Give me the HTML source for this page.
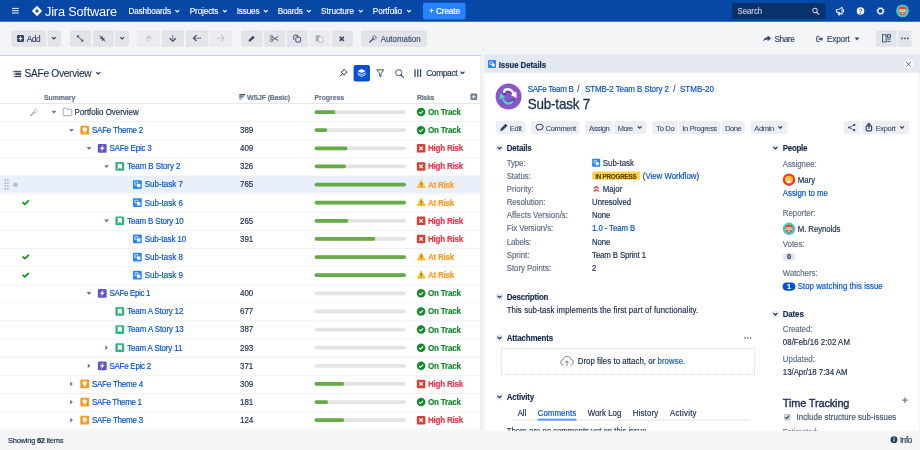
<!DOCTYPE html><html><head><meta charset="utf-8"><title>Structure</title><style>
html,body{margin:0;padding:0}
body{width:920px;height:450px;overflow:hidden;position:relative;background:#f4f5f7;font-family:"Liberation Sans", sans-serif;}
.b{position:absolute;display:block}
.t{position:absolute;white-space:nowrap;line-height:12px;font-family:"Liberation Sans", sans-serif;-webkit-text-stroke:.16px;transform:scaleY(1.07);transform-origin:50% 60%;}

</style></head><body>
<div id="root" style="position:absolute;left:0;top:0;width:920px;height:450px;will-change:transform;">
<svg class="b" style="left:0;top:0" width="920" height="450" viewBox="0 0 920 450"><path d="M0.00 0.00H920.00V21.80H0.00V0.00Z" fill="#0747a6"/><path d="M424.90 2.80H463.50A2.0 2.0 0 0 1 465.50 4.80V17.60A2.0 2.0 0 0 1 463.50 19.60H424.90A2.0 2.0 0 0 1 422.90 17.60V4.80A2.0 2.0 0 0 1 424.90 2.80Z" fill="#2684ff"/><path d="M734.00 3.00H823.50A2.0 2.0 0 0 1 825.50 5.00V17.00A2.0 2.0 0 0 1 823.50 19.00H734.00A2.0 2.0 0 0 1 732.00 17.00V5.00A2.0 2.0 0 0 1 734.00 3.00Z" fill="#09326c"/><path d="M13.10 30.50H45.90V46.80H13.10A2.0 2.0 0 0 1 11.10 44.80V32.50A2.0 2.0 0 0 1 13.10 30.50Z" fill="#e1e4e9"/><path d="M47.60 30.50H59.20A2.0 2.0 0 0 1 61.20 32.50V44.80A2.0 2.0 0 0 1 59.20 46.80H47.60V30.50Z" fill="#e1e4e9"/><path d="M71.80 30.50H91.00V46.80H71.80A2.0 2.0 0 0 1 69.80 44.80V32.50A2.0 2.0 0 0 1 71.80 30.50Z" fill="#e1e4e9"/><path d="M92.90 30.50H113.80V46.80H92.90V30.50Z" fill="#e1e4e9"/><path d="M115.20 30.50H127.00A2.0 2.0 0 0 1 129.00 32.50V44.80A2.0 2.0 0 0 1 127.00 46.80H115.20V30.50Z" fill="#e1e4e9"/><path d="M139.20 30.50H160.00V46.80H139.20A2.0 2.0 0 0 1 137.20 44.80V32.50A2.0 2.0 0 0 1 139.20 30.50Z" fill="#eaecf0"/><path d="M161.70 30.50H184.00V46.80H161.70V30.50Z" fill="#e1e4e9"/><path d="M185.90 30.50H208.30V46.80H185.90V30.50Z" fill="#e1e4e9"/><path d="M210.00 30.50H230.20A2.0 2.0 0 0 1 232.20 32.50V44.80A2.0 2.0 0 0 1 230.20 46.80H210.00V30.50Z" fill="#eaecf0"/><path d="M243.00 30.50H262.50V46.80H243.00A2.0 2.0 0 0 1 241.00 44.80V32.50A2.0 2.0 0 0 1 243.00 30.50Z" fill="#e1e4e9"/><path d="M264.20 30.50H285.20V46.80H264.20V30.50Z" fill="#e1e4e9"/><path d="M286.90 30.50H307.70V46.80H286.90V30.50Z" fill="#e1e4e9"/><path d="M309.00 30.50H330.20V46.80H309.00V30.50Z" fill="#eaecf0"/><path d="M331.90 30.50H350.90A2.0 2.0 0 0 1 352.90 32.50V44.80A2.0 2.0 0 0 1 350.90 46.80H331.90V30.50Z" fill="#e1e4e9"/><path d="M363.00 30.50H425.00A2.0 2.0 0 0 1 427.00 32.50V44.80A2.0 2.0 0 0 1 425.00 46.80H363.00A2.0 2.0 0 0 1 361.00 44.80V32.50A2.0 2.0 0 0 1 363.00 30.50Z" fill="#e1e4e9"/><path d="M878.00 30.50H896.50V46.80H878.00A2.0 2.0 0 0 1 876.00 44.80V32.50A2.0 2.0 0 0 1 878.00 30.50Z" fill="#e1e4e9"/><path d="M898.00 30.50H909.50A2.0 2.0 0 0 1 911.50 32.50V44.80A2.0 2.0 0 0 1 909.50 46.80H898.00V30.50Z" fill="#e1e4e9"/><path d="M0.00 55.00H481.00V431.00H0.00V55.00Z" fill="#fff"/><path d="M0.00 55.00H481.00V56.00H0.00V55.00Z" fill="#b3d4ff"/><path d="M480.50 56.00H481.30V431.00H480.50V56.00Z" fill="#dfe1e6"/><path d="M355.60 65.00H368.00A2.0 2.0 0 0 1 370.00 67.00V79.50A2.0 2.0 0 0 1 368.00 81.50H355.60A2.0 2.0 0 0 1 353.60 79.50V67.00A2.0 2.0 0 0 1 355.60 65.00Z" fill="#0a4fd1"/><path d="M0.00 103.10H481.00V103.90H0.00V103.10Z" fill="#e4e6ea"/><path d="M0.00 121.22H481.00V122.02H0.00V121.22Z" fill="#eef0f3"/><path d="M316.50 110.16H404.00A2.0 2.0 0 0 1 406.00 112.16V111.96A2.0 2.0 0 0 1 404.00 113.96H316.50A2.0 2.0 0 0 1 314.50 111.96V112.16A2.0 2.0 0 0 1 316.50 110.16Z" fill="#e4e4e4"/><path d="M316.50 110.16H333.55A2.0 2.0 0 0 1 335.55 112.16V111.96A2.0 2.0 0 0 1 333.55 113.96H316.50A2.0 2.0 0 0 1 314.50 111.96V112.16A2.0 2.0 0 0 1 316.50 110.16Z" fill="#67ab49"/><path d="M0.00 139.35H481.00V140.15H0.00V139.35Z" fill="#eef0f3"/><path d="M316.50 128.29H404.00A2.0 2.0 0 0 1 406.00 130.29V130.09A2.0 2.0 0 0 1 404.00 132.09H316.50A2.0 2.0 0 0 1 314.50 130.09V130.29A2.0 2.0 0 0 1 316.50 128.29Z" fill="#e4e4e4"/><path d="M316.50 128.29H325.31A2.0 2.0 0 0 1 327.31 130.29V130.09A2.0 2.0 0 0 1 325.31 132.09H316.50A2.0 2.0 0 0 1 314.50 130.09V130.29A2.0 2.0 0 0 1 316.50 128.29Z" fill="#67ab49"/><path d="M0.00 157.47H481.00V158.27H0.00V157.47Z" fill="#eef0f3"/><path d="M316.50 146.41H404.00A2.0 2.0 0 0 1 406.00 148.41V148.21A2.0 2.0 0 0 1 404.00 150.21H316.50A2.0 2.0 0 0 1 314.50 148.21V148.41A2.0 2.0 0 0 1 316.50 146.41Z" fill="#e4e4e4"/><path d="M316.50 146.41H345.44A2.0 2.0 0 0 1 347.44 148.41V148.21A2.0 2.0 0 0 1 345.44 150.21H316.50A2.0 2.0 0 0 1 314.50 148.21V148.41A2.0 2.0 0 0 1 316.50 146.41Z" fill="#67ab49"/><path d="M0.00 175.60H481.00V176.40H0.00V175.60Z" fill="#eef0f3"/><path d="M316.50 164.54H404.00A2.0 2.0 0 0 1 406.00 166.54V166.34A2.0 2.0 0 0 1 404.00 168.34H316.50A2.0 2.0 0 0 1 314.50 166.34V166.54A2.0 2.0 0 0 1 316.50 164.54Z" fill="#e4e4e4"/><path d="M316.50 164.54H344.07A2.0 2.0 0 0 1 346.07 166.54V166.34A2.0 2.0 0 0 1 344.07 168.34H316.50A2.0 2.0 0 0 1 314.50 166.34V166.54A2.0 2.0 0 0 1 316.50 164.54Z" fill="#67ab49"/><path d="M0.00 175.90H480.50V193.33H0.00V175.90Z" fill="#e9f0fc"/><path d="M0.00 193.72H481.00V194.52H0.00V193.72Z" fill="#eef0f3"/><path d="M316.50 182.66H404.00A2.0 2.0 0 0 1 406.00 184.66V184.46A2.0 2.0 0 0 1 404.00 186.46H316.50A2.0 2.0 0 0 1 314.50 184.46V184.66A2.0 2.0 0 0 1 316.50 182.66Z" fill="#e4e4e4"/><path d="M316.50 182.66H404.00A2.0 2.0 0 0 1 406.00 184.66V184.46A2.0 2.0 0 0 1 404.00 186.46H316.50A2.0 2.0 0 0 1 314.50 184.46V184.66A2.0 2.0 0 0 1 316.50 182.66Z" fill="#67ab49"/><path d="M0.00 211.85H481.00V212.65H0.00V211.85Z" fill="#eef0f3"/><path d="M316.50 200.79H404.00A2.0 2.0 0 0 1 406.00 202.79V202.59A2.0 2.0 0 0 1 404.00 204.59H316.50A2.0 2.0 0 0 1 314.50 202.59V202.79A2.0 2.0 0 0 1 316.50 200.79Z" fill="#e4e4e4"/><path d="M316.50 200.79H404.00A2.0 2.0 0 0 1 406.00 202.79V202.59A2.0 2.0 0 0 1 404.00 204.59H316.50A2.0 2.0 0 0 1 314.50 202.59V202.79A2.0 2.0 0 0 1 316.50 200.79Z" fill="#67ab49"/><path d="M0.00 229.97H481.00V230.77H0.00V229.97Z" fill="#eef0f3"/><path d="M316.50 218.91H404.00A2.0 2.0 0 0 1 406.00 220.91V220.71A2.0 2.0 0 0 1 404.00 222.71H316.50A2.0 2.0 0 0 1 314.50 220.71V220.91A2.0 2.0 0 0 1 316.50 218.91Z" fill="#e4e4e4"/><path d="M316.50 218.91H346.35A2.0 2.0 0 0 1 348.35 220.91V220.71A2.0 2.0 0 0 1 346.35 222.71H316.50A2.0 2.0 0 0 1 314.50 220.71V220.91A2.0 2.0 0 0 1 316.50 218.91Z" fill="#67ab49"/><path d="M0.00 248.10H481.00V248.90H0.00V248.10Z" fill="#eef0f3"/><path d="M316.50 237.04H404.00A2.0 2.0 0 0 1 406.00 239.04V238.84A2.0 2.0 0 0 1 404.00 240.84H316.50A2.0 2.0 0 0 1 314.50 238.84V239.04A2.0 2.0 0 0 1 316.50 237.04Z" fill="#e4e4e4"/><path d="M316.50 237.04H373.35A2.0 2.0 0 0 1 375.35 239.04V238.84A2.0 2.0 0 0 1 373.35 240.84H316.50A2.0 2.0 0 0 1 314.50 238.84V239.04A2.0 2.0 0 0 1 316.50 237.04Z" fill="#67ab49"/><path d="M0.00 266.23H481.00V267.03H0.00V266.23Z" fill="#eef0f3"/><path d="M316.50 255.16H404.00A2.0 2.0 0 0 1 406.00 257.16V256.96A2.0 2.0 0 0 1 404.00 258.96H316.50A2.0 2.0 0 0 1 314.50 256.96V257.16A2.0 2.0 0 0 1 316.50 255.16Z" fill="#e4e4e4"/><path d="M316.50 255.16H404.00A2.0 2.0 0 0 1 406.00 257.16V256.96A2.0 2.0 0 0 1 404.00 258.96H316.50A2.0 2.0 0 0 1 314.50 256.96V257.16A2.0 2.0 0 0 1 316.50 255.16Z" fill="#67ab49"/><path d="M0.00 284.35H481.00V285.15H0.00V284.35Z" fill="#eef0f3"/><path d="M316.50 273.29H404.00A2.0 2.0 0 0 1 406.00 275.29V275.09A2.0 2.0 0 0 1 404.00 277.09H316.50A2.0 2.0 0 0 1 314.50 275.09V275.29A2.0 2.0 0 0 1 316.50 273.29Z" fill="#e4e4e4"/><path d="M316.50 273.29H404.00A2.0 2.0 0 0 1 406.00 275.29V275.09A2.0 2.0 0 0 1 404.00 277.09H316.50A2.0 2.0 0 0 1 314.50 275.09V275.29A2.0 2.0 0 0 1 316.50 273.29Z" fill="#67ab49"/><path d="M0.00 302.48H481.00V303.28H0.00V302.48Z" fill="#eef0f3"/><path d="M316.50 291.41H404.00A2.0 2.0 0 0 1 406.00 293.41V293.21A2.0 2.0 0 0 1 404.00 295.21H316.50A2.0 2.0 0 0 1 314.50 293.21V293.41A2.0 2.0 0 0 1 316.50 291.41Z" fill="#e4e4e4"/><path d="M0.00 320.60H481.00V321.40H0.00V320.60Z" fill="#eef0f3"/><path d="M316.50 309.54H404.00A2.0 2.0 0 0 1 406.00 311.54V311.34A2.0 2.0 0 0 1 404.00 313.34H316.50A2.0 2.0 0 0 1 314.50 311.34V311.54A2.0 2.0 0 0 1 316.50 309.54Z" fill="#e4e4e4"/><path d="M0.00 338.73H481.00V339.53H0.00V338.73Z" fill="#eef0f3"/><path d="M316.50 327.66H404.00A2.0 2.0 0 0 1 406.00 329.66V329.46A2.0 2.0 0 0 1 404.00 331.46H316.50A2.0 2.0 0 0 1 314.50 329.46V329.66A2.0 2.0 0 0 1 316.50 327.66Z" fill="#e4e4e4"/><path d="M0.00 356.85H481.00V357.65H0.00V356.85Z" fill="#eef0f3"/><path d="M316.50 345.79H404.00A2.0 2.0 0 0 1 406.00 347.79V347.59A2.0 2.0 0 0 1 404.00 349.59H316.50A2.0 2.0 0 0 1 314.50 347.59V347.79A2.0 2.0 0 0 1 316.50 345.79Z" fill="#e4e4e4"/><path d="M0.00 374.98H481.00V375.78H0.00V374.98Z" fill="#eef0f3"/><path d="M316.50 363.91H404.00A2.0 2.0 0 0 1 406.00 365.91V365.71A2.0 2.0 0 0 1 404.00 367.71H316.50A2.0 2.0 0 0 1 314.50 365.71V365.91A2.0 2.0 0 0 1 316.50 363.91Z" fill="#e4e4e4"/><path d="M0.00 393.10H481.00V393.90H0.00V393.10Z" fill="#eef0f3"/><path d="M316.50 382.04H404.00A2.0 2.0 0 0 1 406.00 384.04V383.84A2.0 2.0 0 0 1 404.00 385.84H316.50A2.0 2.0 0 0 1 314.50 383.84V384.04A2.0 2.0 0 0 1 316.50 382.04Z" fill="#e4e4e4"/><path d="M316.50 382.04H342.24A2.0 2.0 0 0 1 344.24 384.04V383.84A2.0 2.0 0 0 1 342.24 385.84H316.50A2.0 2.0 0 0 1 314.50 383.84V384.04A2.0 2.0 0 0 1 316.50 382.04Z" fill="#67ab49"/><path d="M0.00 411.23H481.00V412.03H0.00V411.23Z" fill="#eef0f3"/><path d="M316.50 400.16H404.00A2.0 2.0 0 0 1 406.00 402.16V401.96A2.0 2.0 0 0 1 404.00 403.96H316.50A2.0 2.0 0 0 1 314.50 401.96V402.16A2.0 2.0 0 0 1 316.50 400.16Z" fill="#e4e4e4"/><path d="M316.50 400.16H326.22A2.0 2.0 0 0 1 328.22 402.16V401.96A2.0 2.0 0 0 1 326.22 403.96H316.50A2.0 2.0 0 0 1 314.50 401.96V402.16A2.0 2.0 0 0 1 316.50 400.16Z" fill="#67ab49"/><path d="M0.00 429.35H481.00V430.15H0.00V429.35Z" fill="#eef0f3"/><path d="M316.50 418.29H404.00A2.0 2.0 0 0 1 406.00 420.29V420.09A2.0 2.0 0 0 1 404.00 422.09H316.50A2.0 2.0 0 0 1 314.50 420.09V420.29A2.0 2.0 0 0 1 316.50 418.29Z" fill="#e4e4e4"/><path d="M316.50 418.29H342.24A2.0 2.0 0 0 1 344.24 420.29V420.09A2.0 2.0 0 0 1 342.24 422.09H316.50A2.0 2.0 0 0 1 314.50 420.09V420.29A2.0 2.0 0 0 1 316.50 418.29Z" fill="#67ab49"/><path d="M484.70 55.50H918.30V431.00H484.70V55.50Z" fill="#fff"/><path d="M484.00 54.80H920.00V72.70H484.00V54.80Z" fill="#e4e8f1"/><path d="M497.70 121.00H523.30A2.0 2.0 0 0 1 525.30 123.00V132.00A2.0 2.0 0 0 1 523.30 134.00H497.70A2.0 2.0 0 0 1 495.70 132.00V123.00A2.0 2.0 0 0 1 497.70 121.00Z" fill="#eceef1"/><path d="M533.00 121.00H577.30A2.0 2.0 0 0 1 579.30 123.00V132.00A2.0 2.0 0 0 1 577.30 134.00H533.00A2.0 2.0 0 0 1 531.00 132.00V123.00A2.0 2.0 0 0 1 533.00 121.00Z" fill="#eceef1"/><path d="M587.30 121.00H612.70V134.00H587.30A2.0 2.0 0 0 1 585.30 132.00V123.00A2.0 2.0 0 0 1 587.30 121.00Z" fill="#eceef1"/><path d="M614.00 121.00H644.00A2.0 2.0 0 0 1 646.00 123.00V132.00A2.0 2.0 0 0 1 644.00 134.00H614.00V121.00Z" fill="#eceef1"/><path d="M654.30 121.00H677.70V134.00H654.30A2.0 2.0 0 0 1 652.30 132.00V123.00A2.0 2.0 0 0 1 654.30 121.00Z" fill="#eceef1"/><path d="M679.00 121.00H720.30V134.00H679.00V121.00Z" fill="#eceef1"/><path d="M721.70 121.00H742.70A2.0 2.0 0 0 1 744.70 123.00V132.00A2.0 2.0 0 0 1 742.70 134.00H721.70V121.00Z" fill="#eceef1"/><path d="M752.70 121.00H785.30A2.0 2.0 0 0 1 787.30 123.00V132.00A2.0 2.0 0 0 1 785.30 134.00H752.70A2.0 2.0 0 0 1 750.70 132.00V123.00A2.0 2.0 0 0 1 752.70 121.00Z" fill="#eceef1"/><path d="M845.70 121.00H860.00V134.00H845.70A2.0 2.0 0 0 1 843.70 132.00V123.00A2.0 2.0 0 0 1 845.70 121.00Z" fill="#eceef1"/><path d="M861.50 121.00H907.00A2.0 2.0 0 0 1 909.00 123.00V132.00A2.0 2.0 0 0 1 907.00 134.00H861.50V121.00Z" fill="#eceef1"/><path d="M497.50 144.40H501.50A1.5 1.5 0 0 1 503.00 145.90V149.90A1.5 1.5 0 0 1 501.50 151.40H497.50A1.5 1.5 0 0 1 496.00 149.90V145.90A1.5 1.5 0 0 1 497.50 144.40Z" fill="#ebecf0"/><path d="M593.60 171.40H638.80A1.5 1.5 0 0 1 640.30 172.90V178.30A1.5 1.5 0 0 1 638.80 179.80H593.60A1.5 1.5 0 0 1 592.10 178.30V172.90A1.5 1.5 0 0 1 593.60 171.40Z" fill="#ffd351"/><path d="M497.50 293.20H501.50A1.5 1.5 0 0 1 503.00 294.70V298.70A1.5 1.5 0 0 1 501.50 300.20H497.50A1.5 1.5 0 0 1 496.00 298.70V294.70A1.5 1.5 0 0 1 497.50 293.20Z" fill="#ebecf0"/><path d="M497.50 334.30H501.50A1.5 1.5 0 0 1 503.00 335.80V339.80A1.5 1.5 0 0 1 501.50 341.30H497.50A1.5 1.5 0 0 1 496.00 339.80V335.80A1.5 1.5 0 0 1 497.50 334.30Z" fill="#ebecf0"/><path d="M497.50 393.20H501.50A1.5 1.5 0 0 1 503.00 394.70V398.70A1.5 1.5 0 0 1 501.50 400.20H497.50A1.5 1.5 0 0 1 496.00 398.70V394.70A1.5 1.5 0 0 1 497.50 393.20Z" fill="#ebecf0"/><path d="M512.30 419.30H749.30V420.90H512.30V419.30Z" fill="#ebedf0"/><path d="M537.50 418.70H576.50V420.60H537.50V418.70Z" fill="#4c8fff"/><path d="M773.40 144.40H777.40A1.5 1.5 0 0 1 778.90 145.90V149.90A1.5 1.5 0 0 1 777.40 151.40H773.40A1.5 1.5 0 0 1 771.90 149.90V145.90A1.5 1.5 0 0 1 773.40 144.40Z" fill="#ebecf0"/><path d="M786.60 252.70H791.40A4.0 4.0 0 0 1 795.40 256.70V256.70A4.0 4.0 0 0 1 791.40 260.70H786.60A4.0 4.0 0 0 1 782.60 256.70V256.70A4.0 4.0 0 0 1 786.60 252.70Z" fill="#e4e6ea"/><path d="M786.70 282.40H791.30A4.1 4.1 0 0 1 795.40 286.50V286.60A4.1 4.1 0 0 1 791.30 290.70H786.70A4.1 4.1 0 0 1 782.60 286.60V286.50A4.1 4.1 0 0 1 786.70 282.40Z" fill="#0052cc"/><path d="M773.40 310.50H777.40A1.5 1.5 0 0 1 778.90 312.00V316.00A1.5 1.5 0 0 1 777.40 317.50H773.40A1.5 1.5 0 0 1 771.90 316.00V312.00A1.5 1.5 0 0 1 773.40 310.50Z" fill="#ebecf0"/></svg>
<div class="t" style="left:45px;top:5.50px;font-size:12.77px;color:#fff;font-weight:400;letter-spacing:-0.194px;-webkit-text-stroke:0;">Jira Software</div>
<div class="t" style="left:128.6px;top:5.70px;font-size:8.24px;color:#fff;font-weight:400;letter-spacing:-0.213px;-webkit-text-stroke:.12px #fff;">Dashboards</div>
<div class="t" style="left:189.8px;top:5.70px;font-size:8.24px;color:#fff;font-weight:400;letter-spacing:-0.171px;-webkit-text-stroke:.12px #fff;">Projects</div>
<div class="t" style="left:236.8px;top:5.70px;font-size:8.24px;color:#fff;font-weight:400;letter-spacing:-0.219px;-webkit-text-stroke:.12px #fff;">Issues</div>
<div class="t" style="left:277.7px;top:5.70px;font-size:8.24px;color:#fff;font-weight:400;letter-spacing:-0.201px;-webkit-text-stroke:.12px #fff;">Boards</div>
<div class="t" style="left:321.1px;top:5.70px;font-size:8.24px;color:#fff;font-weight:400;letter-spacing:-0.059px;-webkit-text-stroke:.12px #fff;">Structure</div>
<div class="t" style="left:372.8px;top:5.70px;font-size:8.24px;color:#fff;font-weight:400;letter-spacing:-0.103px;-webkit-text-stroke:.12px #fff;">Portfolio</div>
<div class="t" style="left:429.1px;top:5.80px;font-size:8.24px;color:#fff;font-weight:400;letter-spacing:-0.117px;-webkit-text-stroke:.2px #fff;">+ Create</div>
<div class="t" style="left:737.5px;top:5.90px;font-size:7.8px;color:#c1cce0;font-weight:400;">Search</div>
<div class="t" style="left:26.7px;top:33.80px;font-size:8.24px;color:#344563;font-weight:400;letter-spacing:-0.421px;-webkit-text-stroke:.15px #344563;">Add</div>
<div class="t" style="left:380.7px;top:33.80px;font-size:7.9px;color:#344563;font-weight:400;-webkit-text-stroke:.1px #344563;">Automation</div>
<div class="t" style="left:774.5px;top:33.90px;font-size:8.24px;color:#344563;font-weight:400;letter-spacing:-0.438px;-webkit-text-stroke:.15px #344563;">Share</div>
<div class="t" style="left:827px;top:33.90px;font-size:8.24px;color:#344563;font-weight:400;letter-spacing:-0.219px;-webkit-text-stroke:.15px #344563;">Export</div>
<div class="t" style="left:24.5px;top:68.40px;font-size:10.2px;color:#172b4d;font-weight:400;letter-spacing:-0.304px;-webkit-text-stroke:.1px #172b4d;">SAFe Overview</div>
<div class="t" style="left:426.2px;top:68.20px;font-size:8.24px;color:#172b4d;font-weight:400;letter-spacing:-0.268px;">Compact</div>
<div class="t" style="left:44px;top:92.20px;font-size:7.0px;color:#66738a;font-weight:700;letter-spacing:-0.101px;">Summary</div>
<div class="t" style="left:247px;top:92.20px;font-size:7.0px;color:#66738a;font-weight:700;letter-spacing:-0.144px;">WSJF (Basic)</div>
<div class="t" style="left:314.5px;top:92.20px;font-size:7.0px;color:#66738a;font-weight:700;letter-spacing:-0.106px;">Progress</div>
<div class="t" style="left:417px;top:92.20px;font-size:7.0px;color:#66738a;font-weight:700;letter-spacing:-0.336px;">Risks</div>
<div class="t" style="left:74.6px;top:106.96px;font-size:7.98px;color:#172b4d;font-weight:400;letter-spacing:-0.036px;">Portfolio Overview</div>
<div class="t" style="left:428px;top:107.06px;font-size:8.03px;color:#14892c;font-weight:700;letter-spacing:-0.196px;">On Track</div>
<div class="t" style="left:91.9px;top:125.09px;font-size:7.98px;color:#0052cc;font-weight:400;letter-spacing:-0.185px;">SAFe Theme 2</div>
<div class="t" style="left:240px;top:125.09px;font-size:7.98px;color:#172b4d;font-weight:400;letter-spacing:-0.005px;">389</div>
<div class="t" style="left:428px;top:125.19px;font-size:8.03px;color:#14892c;font-weight:700;letter-spacing:-0.196px;">On Track</div>
<div class="t" style="left:109.53px;top:143.21px;font-size:7.98px;color:#0052cc;font-weight:400;letter-spacing:-0.217px;">SAFe Epic 3</div>
<div class="t" style="left:240px;top:143.21px;font-size:7.98px;color:#172b4d;font-weight:400;letter-spacing:-0.005px;">409</div>
<div class="t" style="left:428px;top:143.31px;font-size:8.03px;color:#e5354b;font-weight:700;letter-spacing:-0.226px;">High Risk</div>
<div class="t" style="left:127.16px;top:161.34px;font-size:7.98px;color:#0052cc;font-weight:400;letter-spacing:-0.101px;">Team B Story 2</div>
<div class="t" style="left:240px;top:161.34px;font-size:7.98px;color:#172b4d;font-weight:400;letter-spacing:-0.005px;">326</div>
<div class="t" style="left:428px;top:161.44px;font-size:8.03px;color:#e5354b;font-weight:700;letter-spacing:-0.226px;">High Risk</div>
<div class="t" style="left:144.79000000000002px;top:179.46px;font-size:7.98px;color:#0052cc;font-weight:400;letter-spacing:0.006px;">Sub-task 7</div>
<div class="t" style="left:240px;top:179.46px;font-size:7.98px;color:#172b4d;font-weight:400;letter-spacing:-0.005px;">765</div>
<div class="t" style="left:428px;top:179.56px;font-size:8.03px;color:#ff991f;font-weight:700;letter-spacing:-0.252px;">At Risk</div>
<div class="t" style="left:144.79000000000002px;top:197.59px;font-size:7.98px;color:#0052cc;font-weight:400;letter-spacing:-0.004px;">Sub-task 6</div>
<div class="t" style="left:428px;top:197.69px;font-size:8.03px;color:#ff991f;font-weight:700;letter-spacing:-0.252px;">At Risk</div>
<div class="t" style="left:127.16px;top:215.71px;font-size:7.98px;color:#0052cc;font-weight:400;letter-spacing:-0.163px;">Team B Story 10</div>
<div class="t" style="left:240px;top:215.71px;font-size:7.98px;color:#172b4d;font-weight:400;letter-spacing:-0.005px;">265</div>
<div class="t" style="left:428px;top:215.81px;font-size:8.03px;color:#e5354b;font-weight:700;letter-spacing:-0.226px;">High Risk</div>
<div class="t" style="left:144.79000000000002px;top:233.84px;font-size:7.98px;color:#0052cc;font-weight:400;letter-spacing:-0.116px;">Sub-task 10</div>
<div class="t" style="left:240px;top:233.84px;font-size:7.98px;color:#172b4d;font-weight:400;letter-spacing:-0.005px;">391</div>
<div class="t" style="left:428px;top:233.94px;font-size:8.03px;color:#e5354b;font-weight:700;letter-spacing:-0.226px;">High Risk</div>
<div class="t" style="left:144.79000000000002px;top:251.96px;font-size:7.98px;color:#0052cc;font-weight:400;letter-spacing:-0.004px;">Sub-task 8</div>
<div class="t" style="left:428px;top:252.06px;font-size:8.03px;color:#ff991f;font-weight:700;letter-spacing:-0.252px;">At Risk</div>
<div class="t" style="left:144.79000000000002px;top:270.09px;font-size:7.98px;color:#0052cc;font-weight:400;letter-spacing:-0.004px;">Sub-task 9</div>
<div class="t" style="left:428px;top:270.19px;font-size:8.03px;color:#ff991f;font-weight:700;letter-spacing:-0.252px;">At Risk</div>
<div class="t" style="left:109.53px;top:288.21px;font-size:7.98px;color:#0052cc;font-weight:400;letter-spacing:-0.344px;">SAFe Epic 1</div>
<div class="t" style="left:240px;top:288.21px;font-size:7.98px;color:#172b4d;font-weight:400;letter-spacing:-0.005px;">400</div>
<div class="t" style="left:428px;top:288.31px;font-size:8.03px;color:#14892c;font-weight:700;letter-spacing:-0.196px;">On Track</div>
<div class="t" style="left:127.16px;top:306.34px;font-size:7.98px;color:#0052cc;font-weight:400;letter-spacing:-0.131px;">Team A Story 12</div>
<div class="t" style="left:240px;top:306.34px;font-size:7.98px;color:#172b4d;font-weight:400;letter-spacing:-0.005px;">677</div>
<div class="t" style="left:428px;top:306.44px;font-size:8.03px;color:#14892c;font-weight:700;letter-spacing:-0.196px;">On Track</div>
<div class="t" style="left:127.16px;top:324.46px;font-size:7.98px;color:#0052cc;font-weight:400;letter-spacing:-0.105px;">Team A Story 13</div>
<div class="t" style="left:240px;top:324.46px;font-size:7.98px;color:#172b4d;font-weight:400;letter-spacing:-0.005px;">387</div>
<div class="t" style="left:428px;top:324.56px;font-size:8.03px;color:#14892c;font-weight:700;letter-spacing:-0.196px;">On Track</div>
<div class="t" style="left:127.16px;top:342.59px;font-size:7.98px;color:#0052cc;font-weight:400;letter-spacing:-0.159px;">Team A Story 11</div>
<div class="t" style="left:240px;top:342.59px;font-size:7.98px;color:#172b4d;font-weight:400;letter-spacing:-0.005px;">293</div>
<div class="t" style="left:428px;top:342.69px;font-size:8.03px;color:#14892c;font-weight:700;letter-spacing:-0.196px;">On Track</div>
<div class="t" style="left:109.53px;top:360.71px;font-size:7.98px;color:#0052cc;font-weight:400;letter-spacing:-0.262px;">SAFe Epic 2</div>
<div class="t" style="left:240px;top:360.71px;font-size:7.98px;color:#172b4d;font-weight:400;letter-spacing:-0.005px;">371</div>
<div class="t" style="left:428px;top:360.81px;font-size:8.03px;color:#14892c;font-weight:700;letter-spacing:-0.196px;">On Track</div>
<div class="t" style="left:91.9px;top:378.84px;font-size:7.98px;color:#0052cc;font-weight:400;letter-spacing:-0.202px;">SAFe Theme 4</div>
<div class="t" style="left:240px;top:378.84px;font-size:7.98px;color:#172b4d;font-weight:400;letter-spacing:-0.005px;">309</div>
<div class="t" style="left:428px;top:378.94px;font-size:8.03px;color:#e5354b;font-weight:700;letter-spacing:-0.226px;">High Risk</div>
<div class="t" style="left:91.9px;top:396.96px;font-size:7.98px;color:#0052cc;font-weight:400;letter-spacing:-0.31px;">SAFe Theme 1</div>
<div class="t" style="left:240px;top:396.96px;font-size:7.98px;color:#172b4d;font-weight:400;letter-spacing:-0.005px;">181</div>
<div class="t" style="left:428px;top:397.06px;font-size:8.03px;color:#14892c;font-weight:700;letter-spacing:-0.196px;">On Track</div>
<div class="t" style="left:91.9px;top:415.09px;font-size:7.98px;color:#0052cc;font-weight:400;letter-spacing:-0.202px;">SAFe Theme 3</div>
<div class="t" style="left:240px;top:415.09px;font-size:7.98px;color:#172b4d;font-weight:400;letter-spacing:-0.005px;">124</div>
<div class="t" style="left:428px;top:415.19px;font-size:8.03px;color:#e5354b;font-weight:700;letter-spacing:-0.226px;">High Risk</div>
<div class="t" style="left:498.7px;top:59.70px;font-size:7.83px;color:#172b4d;font-weight:700;letter-spacing:-0.044px;">Issue Details</div>
<div class="t" style="left:527.7px;top:84.30px;font-size:8.03px;color:#0052cc;font-weight:400;letter-spacing:-0.308px;">SAFe Team B</div>
<div class="t" style="left:577.3px;top:84.30px;font-size:7.8px;color:#172b4d;font-weight:400;">/</div>
<div class="t" style="left:585px;top:84.30px;font-size:8.03px;color:#0052cc;font-weight:400;letter-spacing:-0.116px;">STMB-2 Team B Story 2</div>
<div class="t" style="left:673.2px;top:84.30px;font-size:7.8px;color:#172b4d;font-weight:400;">/</div>
<div class="t" style="left:680px;top:84.30px;font-size:8.03px;color:#0052cc;font-weight:400;letter-spacing:0.013px;">STMB-20</div>
<div class="t" style="left:527.7px;top:99.30px;font-size:13.39px;color:#172b4d;font-weight:400;letter-spacing:-0.151px;-webkit-text-stroke:.25px #172b4d;line-height:16px;margin-top:-2px;">Sub-task 7</div>
<div class="t" style="left:509.7px;top:123.10px;font-size:7.52px;color:#344563;font-weight:400;letter-spacing:-0.24px;-webkit-text-stroke:.06px;">Edit</div>
<div class="t" style="left:545.7px;top:123.10px;font-size:7.52px;color:#344563;font-weight:400;letter-spacing:-0.371px;-webkit-text-stroke:.06px;">Comment</div>
<div class="t" style="left:589px;top:123.10px;font-size:7.52px;color:#344563;font-weight:400;letter-spacing:-0.379px;-webkit-text-stroke:.06px;">Assign</div>
<div class="t" style="left:617.7px;top:123.10px;font-size:7.52px;color:#344563;font-weight:400;letter-spacing:-0.533px;-webkit-text-stroke:.06px;">More</div>
<div class="t" style="left:656.3px;top:123.10px;font-size:7.52px;color:#344563;font-weight:400;letter-spacing:-0.329px;-webkit-text-stroke:.06px;">To Do</div>
<div class="t" style="left:682.3px;top:123.10px;font-size:7.52px;color:#344563;font-weight:400;letter-spacing:-0.341px;-webkit-text-stroke:.06px;">In Progress</div>
<div class="t" style="left:725px;top:123.10px;font-size:7.52px;color:#344563;font-weight:400;letter-spacing:-0.42px;-webkit-text-stroke:.06px;">Done</div>
<div class="t" style="left:754.3px;top:123.10px;font-size:7.52px;color:#344563;font-weight:400;letter-spacing:-0.383px;-webkit-text-stroke:.06px;">Admin</div>
<div class="t" style="left:875.7px;top:123.10px;font-size:7.52px;color:#344563;font-weight:400;letter-spacing:-0.356px;-webkit-text-stroke:.06px;">Export</div>
<div class="t" style="left:506.8px;top:142.80px;font-size:7.93px;color:#172b4d;font-weight:700;letter-spacing:-0.187px;">Details</div>
<div class="t" style="left:506.7px;top:157.70px;font-size:7.83px;color:#5e6c84;font-weight:400;letter-spacing:-0.07px;">Type:</div>
<div class="t" style="left:506.7px;top:170.85px;font-size:7.83px;color:#5e6c84;font-weight:400;letter-spacing:-0.039px;">Status:</div>
<div class="t" style="left:506.7px;top:184.00px;font-size:7.83px;color:#5e6c84;font-weight:400;letter-spacing:0.04px;">Priority:</div>
<div class="t" style="left:506.7px;top:197.15px;font-size:7.83px;color:#5e6c84;font-weight:400;letter-spacing:-0.043px;">Resolution:</div>
<div class="t" style="left:506.7px;top:210.30px;font-size:7.83px;color:#5e6c84;font-weight:400;letter-spacing:0.058px;">Affects Version/s:</div>
<div class="t" style="left:506.7px;top:223.45px;font-size:7.83px;color:#5e6c84;font-weight:400;letter-spacing:-0.035px;">Fix Version/s:</div>
<div class="t" style="left:506.7px;top:236.60px;font-size:7.83px;color:#5e6c84;font-weight:400;letter-spacing:-0.121px;">Labels:</div>
<div class="t" style="left:506.7px;top:249.75px;font-size:7.83px;color:#5e6c84;font-weight:400;letter-spacing:0.024px;">Sprint:</div>
<div class="t" style="left:506.7px;top:262.90px;font-size:7.83px;color:#5e6c84;font-weight:400;letter-spacing:-0.007px;">Story Points:</div>
<div class="t" style="left:602.7px;top:157.70px;font-size:7.83px;color:#172b4d;font-weight:400;letter-spacing:0.062px;">Sub-task</div>
<div class="t" style="left:595.2px;top:170.70px;font-size:6.28px;color:#594300;font-weight:700;letter-spacing:-0.211px;">IN PROGRESS</div>
<div class="t" style="left:642.8px;top:170.80px;font-size:7.83px;color:#172b4d;font-weight:400;letter-spacing:0.002px;">(<span style="color:#0052cc">View Workflow</span>)</div>
<div class="t" style="left:602.7px;top:184.00px;font-size:7.83px;color:#172b4d;font-weight:400;letter-spacing:0.004px;">Major</div>
<div class="t" style="left:592.1px;top:197.15px;font-size:7.83px;color:#172b4d;font-weight:400;letter-spacing:-0.071px;">Unresolved</div>
<div class="t" style="left:592.1px;top:210.30px;font-size:7.83px;color:#172b4d;font-weight:400;letter-spacing:-0.18px;">None</div>
<div class="t" style="left:592.1px;top:223.45px;font-size:7.83px;color:#0052cc;font-weight:400;letter-spacing:-0.112px;">1.0 - Team B</div>
<div class="t" style="left:592.1px;top:236.60px;font-size:7.83px;color:#172b4d;font-weight:400;letter-spacing:-0.18px;">None</div>
<div class="t" style="left:592.1px;top:249.75px;font-size:7.83px;color:#172b4d;font-weight:400;letter-spacing:-0.127px;">Team B Sprint 1</div>
<div class="t" style="left:592.1px;top:262.90px;font-size:7.83px;color:#172b4d;font-weight:400;letter-spacing:-0.355px;">2</div>
<div class="t" style="left:506.8px;top:291.60px;font-size:7.93px;color:#172b4d;font-weight:700;letter-spacing:-0.193px;">Description</div>
<div class="t" style="left:506.7px;top:304.70px;font-size:7.83px;color:#172b4d;font-weight:400;letter-spacing:0.096px;">This sub-task implements the first part of functionality.</div>
<div class="t" style="left:506.8px;top:332.70px;font-size:7.93px;color:#172b4d;font-weight:700;letter-spacing:-0.166px;">Attachments</div>
<div class="b" style="left:501px;top:348.3px;width:254px;height:26.6px;background:transparent;border:1px dotted #d3d7de;box-sizing:border-box;"></div>
<div class="t" style="left:577.7px;top:356.20px;font-size:7.83px;color:#172b4d;font-weight:400;letter-spacing:0.044px;">Drop files to attach, or <span style="color:#1261ab">browse.</span></div>
<div class="t" style="left:506.8px;top:391.60px;font-size:7.93px;color:#172b4d;font-weight:700;letter-spacing:-0.181px;">Activity</div>
<div class="t" style="left:517.7px;top:407.60px;font-size:7.83px;color:#172b4d;font-weight:400;letter-spacing:-0.034px;">All</div>
<div class="t" style="left:537.7px;top:407.60px;font-size:7.83px;color:#0052cc;font-weight:400;letter-spacing:0.093px;">Comments</div>
<div class="t" style="left:587.7px;top:407.60px;font-size:7.83px;color:#172b4d;font-weight:400;letter-spacing:0.029px;">Work Log</div>
<div class="t" style="left:632.7px;top:407.60px;font-size:7.83px;color:#172b4d;font-weight:400;letter-spacing:0.177px;">History</div>
<div class="t" style="left:670px;top:407.60px;font-size:7.83px;color:#172b4d;font-weight:400;letter-spacing:0.238px;">Activity</div>
<div class="t" style="left:506.7px;top:425.60px;font-size:7.83px;color:#172b4d;font-weight:400;letter-spacing:-0.041px;">There are no comments yet on this issue.</div>
<div class="t" style="left:782.6999999999999px;top:142.80px;font-size:7.93px;color:#172b4d;font-weight:700;letter-spacing:-0.234px;">People</div>
<div class="t" style="left:782.8px;top:159.40px;font-size:7.83px;color:#5e6c84;font-weight:400;letter-spacing:-0.065px;">Assignee:</div>
<div class="t" style="left:797.7px;top:174.50px;font-size:7.83px;color:#172b4d;font-weight:400;letter-spacing:0.0px;">Mary</div>
<div class="t" style="left:782.8px;top:188.20px;font-size:7.83px;color:#0052cc;font-weight:400;letter-spacing:-0.013px;">Assign to me</div>
<div class="t" style="left:782.8px;top:207.80px;font-size:7.83px;color:#5e6c84;font-weight:400;letter-spacing:0.007px;">Reporter:</div>
<div class="t" style="left:797.7px;top:223.50px;font-size:7.83px;color:#172b4d;font-weight:400;letter-spacing:-0.074px;">M. Reynolds</div>
<div class="t" style="left:782.8px;top:239.10px;font-size:7.83px;color:#5e6c84;font-weight:400;letter-spacing:-0.011px;">Votes:</div>
<div class="t" style="left:786.9px;top:250.90px;font-size:7.4px;color:#172b4d;font-weight:700;">0</div>
<div class="t" style="left:782.8px;top:268.20px;font-size:7.83px;color:#5e6c84;font-weight:400;letter-spacing:-0.017px;">Watchers:</div>
<div class="t" style="left:787.1px;top:280.70px;font-size:7.4px;color:#fff;font-weight:700;">1</div>
<div class="t" style="left:797.7px;top:281.20px;font-size:7.83px;color:#0052cc;font-weight:400;letter-spacing:0.042px;">Stop watching this issue</div>
<div class="t" style="left:782.6999999999999px;top:308.90px;font-size:7.93px;color:#172b4d;font-weight:700;letter-spacing:-0.12px;">Dates</div>
<div class="t" style="left:782.8px;top:324.10px;font-size:7.83px;color:#5e6c84;font-weight:400;letter-spacing:-0.067px;">Created:</div>
<div class="t" style="left:782.8px;top:336.70px;font-size:7.83px;color:#172b4d;font-weight:400;letter-spacing:0.061px;">08/Feb/16 2:02 AM</div>
<div class="t" style="left:782.8px;top:353.90px;font-size:7.83px;color:#5e6c84;font-weight:400;letter-spacing:0.04px;">Updated:</div>
<div class="t" style="left:782.8px;top:366.70px;font-size:7.83px;color:#172b4d;font-weight:400;letter-spacing:-0.009px;">13/Apr/18 7:34 AM</div>
<div class="t" style="left:782.8px;top:396.70px;font-size:10.92px;color:#172b4d;font-weight:400;letter-spacing:-0.121px;-webkit-text-stroke:.35px #172b4d;line-height:14px;margin-top:-1px;">Time Tracking</div>
<div class="t" style="left:796.5px;top:411.90px;font-size:7.83px;color:#42526e;font-weight:400;letter-spacing:0.086px;">Include structure sub-issues</div>
<div class="t" style="left:782.8px;top:426.90px;font-size:7.6px;color:#5e6c84;font-weight:400;">Estimated:</div>
<svg class="b" style="left:0;top:0" width="920" height="450" viewBox="0 0 920 450"><g transform="translate(12,7.6)"><path d="M0 .8H6.8M0 3.1H6.8M0 5.4H6.8" stroke="#fff" stroke-width=".95"/></g><g transform="translate(31.5,5.5)"><path d="M5.5 .3 L10.7 5.5 L5.5 10.7 L.3 5.5Z" fill="#fff"/><path d="M5.5 3.6 L7.4 5.5 L5.5 7.4 L3.6 5.5Z" fill="#0747a6"/></g><g transform="translate(174.3,8.2)"><path d="M1.4 2.2 L3 3.8 L4.6 2.2" fill="none" stroke="#fff" stroke-width="1.1" stroke-linecap="round" stroke-linejoin="round"/></g><g transform="translate(221.9,8.2)"><path d="M1.4 2.2 L3 3.8 L4.6 2.2" fill="none" stroke="#fff" stroke-width="1.1" stroke-linecap="round" stroke-linejoin="round"/></g><g transform="translate(262.8,8.2)"><path d="M1.4 2.2 L3 3.8 L4.6 2.2" fill="none" stroke="#fff" stroke-width="1.1" stroke-linecap="round" stroke-linejoin="round"/></g><g transform="translate(305.8,8.2)"><path d="M1.4 2.2 L3 3.8 L4.6 2.2" fill="none" stroke="#fff" stroke-width="1.1" stroke-linecap="round" stroke-linejoin="round"/></g><g transform="translate(357.8,8.2)"><path d="M1.4 2.2 L3 3.8 L4.6 2.2" fill="none" stroke="#fff" stroke-width="1.1" stroke-linecap="round" stroke-linejoin="round"/></g><g transform="translate(406,8.2)"><path d="M1.4 2.2 L3 3.8 L4.6 2.2" fill="none" stroke="#fff" stroke-width="1.1" stroke-linecap="round" stroke-linejoin="round"/></g><g transform="translate(811.8,7.3)"><circle cx="3.2" cy="3.2" r="2.3" fill="none" stroke="#dfe6f2" stroke-width="1"/><path d="M5 5L7 7" stroke="#dfe6f2" stroke-width="1.1" stroke-linecap="round"/></g><g transform="translate(835.5,6)"><path d="M1 3.6H3L6.6 1.2V8.4L3 6.2H1Z M2.4 6.4L3.2 9H4.4L3.8 6.4" fill="none" stroke="#fff" stroke-width="1"/><path d="M8 3.3V6.3" stroke="#fff" stroke-width="1"/></g><g transform="translate(856.5,7)"><circle cx="4" cy="4" r="3.8" fill="#fff"/><path d="M2.9 3.1C2.9 1.7 5.2 1.7 5.2 3.1C5.2 4 4 4 4 5" fill="none" stroke="#0747a6" stroke-width=".9"/><circle cx="4" cy="6.2" r=".55" fill="#0747a6"/></g><g transform="translate(876.2,6.7)"><circle cx="4.3" cy="4.3" r="2.7" fill="none" stroke="#fff" stroke-width="1.3"/><circle cx="4.3" cy="4.3" r="3.6" fill="none" stroke="#fff" stroke-width=".9" stroke-dasharray="1.1 1.73"/></g><g transform="translate(896,4.4)"><circle cx="6.5" cy="6.5" r="6.4" fill="#4fc4bf"/><ellipse cx="6.5" cy="4.6" rx="3.6" ry="2.4" fill="#e8452f"/><rect x="3.6" y="4.7" width="5.8" height="3.7" rx="1.2" fill="#f6c8a2"/><path d="M3.6 7.4C3.6 11.7 9.4 11.7 9.4 7.4C8.3 8.4 4.7 8.4 3.6 7.4Z" fill="#e8452f"/><circle cx="5.4" cy="6.4" r=".4" fill="#3a2a2a"/><circle cx="7.6" cy="6.4" r=".4" fill="#3a2a2a"/><rect x="5.6" y="8.7" width="1.8" height=".7" rx=".3" fill="#fff"/></g><g transform="translate(17,35)"><rect width="7" height="7" rx="1.3" fill="#344563"/><path d="M3.5 1.5V5.5M1.5 3.5H5.5" stroke="#fff" stroke-width="1.1"/></g><g transform="translate(50.9,35.2)"><path d="M1.4 2.2 L3 3.8 L4.6 2.2" fill="none" stroke="#344563" stroke-width="1.1" stroke-linecap="round" stroke-linejoin="round"/></g><g transform="translate(76.5,35)"><path d="M1.6 1.6L5.6 5.4" stroke="#344563" stroke-width="1"/><path d="M.4 .4H3L.4 3Z M6.8 6.6H4.2L6.8 4Z" fill="#344563"/></g><g transform="translate(99,35)"><path d="M.4 .6L6.2 6.4" stroke="#344563" stroke-width=".9"/><path d="M3.1 3.3H.9M3.1 3.3V1.1 M3.6 3.8H5.8M3.6 3.8V6" fill="none" stroke="#344563" stroke-width="1"/></g><g transform="translate(119.2,35.2)"><path d="M1.4 2.2 L3 3.8 L4.6 2.2" fill="none" stroke="#344563" stroke-width="1.1" stroke-linecap="round" stroke-linejoin="round"/></g><g transform="translate(145,35)"><path d="M.8 3.8L3.8 .9L6.8 3.8" fill="none" stroke="#a5adba" stroke-width="1"/><path d="M3.8 2.6V6.8" stroke="#a5adba" stroke-width=".9" stroke-dasharray="1.2 .7"/></g><g transform="translate(169,35)"><path d="M.8 3.2L3.8 6.1L6.8 3.2" fill="none" stroke="#344563" stroke-width="1.2"/><path d="M3.8 .2V4.6" stroke="#344563" stroke-width="1" stroke-dasharray="1.4 .6"/></g><g transform="translate(192.6,34.4)"><path d="M3.8 .8L.9 3.8L3.8 6.8" fill="none" stroke="#344563" stroke-width="1.2"/><path d="M2.4 3.8H8.4" stroke="#344563" stroke-width="1" stroke-dasharray="1.5 .7"/></g><g transform="translate(217,34.4)"><path d="M4.2 .8L7.1 3.8L4.2 6.8" fill="none" stroke="#a5adba" stroke-width="1"/><path d="M0 3.8H5.8" stroke="#a5adba" stroke-width=".9" stroke-dasharray="1.3 .7"/></g><g transform="translate(248,35)"><path d="M.5 6.6L.9 4.8L5 .7L6.7 2.4L2.6 6.3Z" fill="#344563"/></g><g transform="translate(269.8,35)"><circle cx="1.7" cy="1.6" r="1.15" fill="none" stroke="#344563" stroke-width=".8"/><circle cx="1.7" cy="5.4" r="1.15" fill="none" stroke="#344563" stroke-width=".8"/><path d="M2.7 2.2L8.4 5.6M2.7 4.8L8.4 1.4" stroke="#344563" stroke-width=".85"/></g><g transform="translate(293,34.6)"><rect x="2.8" y="2.6" width="4.8" height="4.8" rx=".8" fill="none" stroke="#344563" stroke-width=".9"/><path d="M.7 5.2V1.6C.7 1 1.1 .6 1.7 .6H4.6V2.4" fill="none" stroke="#344563" stroke-width=".9"/></g><g transform="translate(315.5,34.8)"><rect x=".3" y=".4" width="4.4" height="6" rx=".5" fill="#a5adba"/><path d="M3 2.2H6L7.3 3.5V7.4H3Z" fill="#f4f5f7" stroke="#a5adba" stroke-width=".7"/></g><g transform="translate(338.8,35.8)"><path d="M.9 .9L5.1 5.1M5.1 .9L.9 5.1" stroke="#344563" stroke-width="1.6"/></g><g transform="translate(368.5,34.5)"><path d="M1 7.9L5.2 3.7" stroke="#344563" stroke-width="1.3"/><path d="M5.8 .4V2M5.8 4.4V5.8M3.4 3.1H4.8M6.8 3.1H8.4M4.1 1.4L5 2.3M7.6 1.4L6.7 2.3M7.6 4.8L6.7 3.9" stroke="#344563" stroke-width=".7"/></g><g transform="translate(762.8,35.2) scale(1.0500,1.0571)"><path d="M4.6 .3L7.8 3L4.6 5.7V4C2.6 3.9 1.3 4.6 .3 6.3C.5 3.6 2 2 4.6 1.9Z" fill="#344563"/></g><g transform="translate(816.2,35.8) scale(0.9000,0.9000)"><path d="M3.6 .6H1.2C.8 .6 .6 .9 .6 1.2V5.8C.6 6.2 .9 6.4 1.2 6.4H3.6" fill="none" stroke="#344563" stroke-width="1.1"/><path d="M2.6 2.6H5V1L7.6 3.5L5 6V4.4H2.6Z" fill="#344563"/></g><g transform="translate(854,37)"><path d="M.6 .6H5.4L3 3.4Z" fill="#344563"/></g><g transform="translate(882,34)"><rect x=".5" y=".7" width="3.6" height="7.2" fill="none" stroke="#344563" stroke-width=".9"/><rect x="5.6" y=".7" width="2.8" height="2.6" fill="none" stroke="#344563" stroke-width=".9"/><path d="M5.2 5.2H8.6M5.2 7.4H8.6" stroke="#344563" stroke-width=".9"/></g><g transform="translate(901,37.4)"><circle cx="1" cy="1" r=".85" fill="#344563"/><circle cx="3.9" cy="1" r=".85" fill="#344563"/><circle cx="6.8" cy="1" r=".85" fill="#344563"/></g><g transform="translate(12,70.3)"><rect x="1.6" y=".5" width="7.6" height="1.1" fill="#344563"/><rect x="0" y=".5" width="1.6" height="1.1" fill="#b3bac5"/><rect x="3.2" y="2.3" width="6" height="2.7" fill="#4a5a75"/><rect x="1" y="2.3" width="2.2" height="2.7" fill="#c1c7d0"/><rect x="2.2" y="5.7" width="7" height="1.1" fill="#344563"/><rect x="1.6" y="5.7" width=".6" height="1.1" fill="#97a0af"/></g><g transform="translate(95.3,70.3)"><path d="M1.3 2.15 L3 3.85 L4.7 2.15" fill="none" stroke="#172b4d" stroke-width="1.1" stroke-linecap="round" stroke-linejoin="round"/></g><g transform="translate(339,68.3)"><path d="M5 .9L8.1 4L6.5 4.6L5.2 7L2 3.8L4.4 2.5Z" fill="none" stroke="#344563" stroke-width=".95" stroke-linejoin="round"/><path d="M3.4 5.6L1.2 7.8" stroke="#344563" stroke-width="1" stroke-linecap="round"/></g><g transform="translate(356.7,68.5)"><path d="M5 .5L9.1 2.5L5 4.5L.9 2.5Z" fill="#fff"/><path d="M.9 4.3L5 6.3L9.1 4.3M.9 6L5 8L9.1 6" fill="none" stroke="#fff" stroke-width=".8"/></g><g transform="translate(376,69)"><path d="M.8 .8H7.8L5 4.4V7.8L3.6 6.8V4.4Z" fill="none" stroke="#344563" stroke-width=".9" stroke-linejoin="round"/></g><g transform="translate(394.5,68.5)"><circle cx="4.2" cy="4.2" r="3.1" fill="none" stroke="#344563" stroke-width=".9"/><path d="M6.5 6.5L8.8 8.8" stroke="#344563" stroke-width="1.1" stroke-linecap="round"/></g><g transform="translate(414,69.2)"><path d="M1 0V7.8M3.8 0V7.8M6.6 0V7.8" stroke="#344563" stroke-width="1.25"/></g><g transform="translate(459.5,69.8)"><path d="M1.4 2.2 L3 3.8 L4.6 2.2" fill="none" stroke="#172b4d" stroke-width="1.1" stroke-linecap="round" stroke-linejoin="round"/></g><g transform="translate(239,94)"><path d="M.2 .8H6.2" stroke="#253858" stroke-width="1.3"/><path d="M.2 2.9H4.6" stroke="#344563" stroke-width="1.2"/><path d="M.2 5H2.6" stroke="#5e6c84" stroke-width="1.1"/></g><g transform="translate(470.4,93.6)"><rect width="6.8" height="6.4" rx="1.2" fill="#6f7c91"/><path d="M3.3 1.4V5.2M1.4 3.3H5.2" stroke="#fff" stroke-width="1"/></g><g transform="translate(29.5,107.5625)"><path d="M1 8.2L5.2 4" stroke="#8993a4" stroke-width="1.1"/><path d="M5.8 .8V2.4M5.8 4.8V6.2M3.4 3.5H4.8M6.8 3.5H8.4M4.1 1.8L5 2.7M7.6 1.8L6.7 2.7M7.6 5.2L6.7 4.3" stroke="#8993a4" stroke-width=".6"/></g><g transform="translate(62.5,107.46249999999999)"><path d="M.6 1.6C.6 1 1 .7 1.5 .7H3.6L4.5 1.8H8.5C9 1.8 9.3 2.2 9.3 2.7V7.4C9.3 7.9 8.9 8.3 8.4 8.3H1.5C1 8.3 .6 7.9 .6 7.4Z" fill="#fff" stroke="#8993a4" stroke-width=".8"/></g><g transform="translate(51,110.2625)"><path d="M.6 .6H5.4L3 3.4Z" fill="#6b778c"/></g><g transform="translate(416.8,107.7625)"><circle cx="4.3" cy="4.3" r="4.3" fill="#14892c"/><path d="M2.3 4.4L3.7 5.8L6.3 3" fill="none" stroke="#fff" stroke-width="1.1"/></g><g transform="translate(80.3,125.7875)"><rect width="8.8" height="8.8" rx="1.2" fill="#ff991f"/><path d="M4.4 1.5C5.7 1.5 6.6 2.4 6.6 3.6C6.6 4.5 6 5 5.5 5.6V6.4C5.5 6.9 5.1 7.2 4.4 7.2C3.7 7.2 3.3 6.9 3.3 6.4V5.6C2.8 5 2.2 4.5 2.2 3.6C2.2 2.4 3.1 1.5 4.4 1.5Z" fill="#fff"/><path d="M3.5 5.9H5.3" stroke="#ff991f" stroke-width=".5"/></g><g transform="translate(68.5,128.3875)"><path d="M.6 .6H5.4L3 3.4Z" fill="#6b778c"/></g><g transform="translate(416.8,125.8875)"><circle cx="4.3" cy="4.3" r="4.3" fill="#14892c"/><path d="M2.3 4.4L3.7 5.8L6.3 3" fill="none" stroke="#fff" stroke-width="1.1"/></g><g transform="translate(97.85,143.9125)"><rect width="8.8" height="8.8" rx="1.2" fill="#6554c0"/><path d="M5.6 .9L2 5.1H4.1L3.2 7.9L6.8 3.7H4.7Z" fill="#fff"/></g><g transform="translate(86.05,146.5125)"><path d="M.6 .6H5.4L3 3.4Z" fill="#6b778c"/></g><g transform="translate(416.8,144.0125)"><rect width="8.6" height="8.6" rx="1.2" fill="#d04437"/><path d="M2.6 2.6L6 6M6 2.6L2.6 6" stroke="#fff" stroke-width="1.2"/></g><g transform="translate(115.4,162.0375)"><rect width="8.8" height="8.8" rx="1.2" fill="#36b37e"/><path d="M2.4 1.7H6.4V7.2L4.4 5.6L2.4 7.2Z" fill="#fff"/></g><g transform="translate(103.60000000000001,164.6375)"><path d="M.6 .6H5.4L3 3.4Z" fill="#6b778c"/></g><g transform="translate(416.8,162.1375)"><rect width="8.6" height="8.6" rx="1.2" fill="#d04437"/><path d="M2.6 2.6L6 6M6 2.6L2.6 6" stroke="#fff" stroke-width="1.2"/></g><g transform="translate(4.3,179.3625)"><rect x="0.3" y="0.2" width="1.2" height="1.2" fill="#7a869a"/><rect x="0.3" y="3.1" width="1.2" height="1.2" fill="#7a869a"/><rect x="0.3" y="6" width="1.2" height="1.2" fill="#7a869a"/><rect x="0.3" y="8.9" width="1.2" height="1.2" fill="#7a869a"/><rect x="2.9" y="0.2" width="1.2" height="1.2" fill="#7a869a"/><rect x="2.9" y="3.1" width="1.2" height="1.2" fill="#7a869a"/><rect x="2.9" y="6" width="1.2" height="1.2" fill="#7a869a"/><rect x="2.9" y="8.9" width="1.2" height="1.2" fill="#7a869a"/></g><g transform="translate(13,182.1625)"><circle cx="2.5" cy="2.5" r="2.2" fill="#b3bac5"/></g><g transform="translate(132.95,180.1625)"><rect width="8.8" height="8.8" rx="1" fill="#2684ff"/><rect x="1.9" y="1.9" width="3" height="3" rx=".3" fill="#2684ff" stroke="#fff" stroke-width=".75"/><rect x="4.1" y="3.8" width="3.3" height="3.3" rx=".4" fill="#fff"/></g><g transform="translate(416.8,179.6625)"><path d="M4.4 1.1L7.9 7.6H.9Z" fill="#f8c63d" stroke="#f8c63d" stroke-width="1.6" stroke-linejoin="round"/><path d="M4.4 .9L8.1 7.7" stroke="#f3b32c" stroke-width=".4" fill="none"/><path d="M4.4 2.9V5.5" stroke="#6b4a12" stroke-width="1"/><circle cx="4.4" cy="6.8" r=".55" fill="#6b4a12"/></g><g transform="translate(132.95,198.2875)"><rect width="8.8" height="8.8" rx="1" fill="#2684ff"/><rect x="1.9" y="1.9" width="3" height="3" rx=".3" fill="#2684ff" stroke="#fff" stroke-width=".75"/><rect x="4.1" y="3.8" width="3.3" height="3.3" rx=".4" fill="#fff"/></g><g transform="translate(416.8,197.7875)"><path d="M4.4 1.1L7.9 7.6H.9Z" fill="#f8c63d" stroke="#f8c63d" stroke-width="1.6" stroke-linejoin="round"/><path d="M4.4 .9L8.1 7.7" stroke="#f3b32c" stroke-width=".4" fill="none"/><path d="M4.4 2.9V5.5" stroke="#6b4a12" stroke-width="1"/><circle cx="4.4" cy="6.8" r=".55" fill="#6b4a12"/></g><g transform="translate(21.5,199.2875)"><path d="M1.5 3.3L3.3 5L6.9 1.6" fill="none" stroke="#0c9412" stroke-width="1.7" stroke-linecap="round" stroke-linejoin="round"/></g><g transform="translate(115.4,216.4125)"><rect width="8.8" height="8.8" rx="1.2" fill="#36b37e"/><path d="M2.4 1.7H6.4V7.2L4.4 5.6L2.4 7.2Z" fill="#fff"/></g><g transform="translate(103.60000000000001,219.0125)"><path d="M.6 .6H5.4L3 3.4Z" fill="#6b778c"/></g><g transform="translate(416.8,216.5125)"><rect width="8.6" height="8.6" rx="1.2" fill="#d04437"/><path d="M2.6 2.6L6 6M6 2.6L2.6 6" stroke="#fff" stroke-width="1.2"/></g><g transform="translate(132.95,234.5375)"><rect width="8.8" height="8.8" rx="1" fill="#2684ff"/><rect x="1.9" y="1.9" width="3" height="3" rx=".3" fill="#2684ff" stroke="#fff" stroke-width=".75"/><rect x="4.1" y="3.8" width="3.3" height="3.3" rx=".4" fill="#fff"/></g><g transform="translate(416.8,234.6375)"><rect width="8.6" height="8.6" rx="1.2" fill="#d04437"/><path d="M2.6 2.6L6 6M6 2.6L2.6 6" stroke="#fff" stroke-width="1.2"/></g><g transform="translate(132.95,252.6625)"><rect width="8.8" height="8.8" rx="1" fill="#2684ff"/><rect x="1.9" y="1.9" width="3" height="3" rx=".3" fill="#2684ff" stroke="#fff" stroke-width=".75"/><rect x="4.1" y="3.8" width="3.3" height="3.3" rx=".4" fill="#fff"/></g><g transform="translate(416.8,252.1625)"><path d="M4.4 1.1L7.9 7.6H.9Z" fill="#f8c63d" stroke="#f8c63d" stroke-width="1.6" stroke-linejoin="round"/><path d="M4.4 .9L8.1 7.7" stroke="#f3b32c" stroke-width=".4" fill="none"/><path d="M4.4 2.9V5.5" stroke="#6b4a12" stroke-width="1"/><circle cx="4.4" cy="6.8" r=".55" fill="#6b4a12"/></g><g transform="translate(21.5,253.6625)"><path d="M1.5 3.3L3.3 5L6.9 1.6" fill="none" stroke="#0c9412" stroke-width="1.7" stroke-linecap="round" stroke-linejoin="round"/></g><g transform="translate(132.95,270.7875)"><rect width="8.8" height="8.8" rx="1" fill="#2684ff"/><rect x="1.9" y="1.9" width="3" height="3" rx=".3" fill="#2684ff" stroke="#fff" stroke-width=".75"/><rect x="4.1" y="3.8" width="3.3" height="3.3" rx=".4" fill="#fff"/></g><g transform="translate(416.8,270.28749999999997)"><path d="M4.4 1.1L7.9 7.6H.9Z" fill="#f8c63d" stroke="#f8c63d" stroke-width="1.6" stroke-linejoin="round"/><path d="M4.4 .9L8.1 7.7" stroke="#f3b32c" stroke-width=".4" fill="none"/><path d="M4.4 2.9V5.5" stroke="#6b4a12" stroke-width="1"/><circle cx="4.4" cy="6.8" r=".55" fill="#6b4a12"/></g><g transform="translate(21.5,271.7875)"><path d="M1.5 3.3L3.3 5L6.9 1.6" fill="none" stroke="#0c9412" stroke-width="1.7" stroke-linecap="round" stroke-linejoin="round"/></g><g transform="translate(97.85,288.9125)"><rect width="8.8" height="8.8" rx="1.2" fill="#6554c0"/><path d="M5.6 .9L2 5.1H4.1L3.2 7.9L6.8 3.7H4.7Z" fill="#fff"/></g><g transform="translate(86.05,291.5125)"><path d="M.6 .6H5.4L3 3.4Z" fill="#6b778c"/></g><g transform="translate(416.8,289.0125)"><circle cx="4.3" cy="4.3" r="4.3" fill="#14892c"/><path d="M2.3 4.4L3.7 5.8L6.3 3" fill="none" stroke="#fff" stroke-width="1.1"/></g><g transform="translate(115.4,307.0375)"><rect width="8.8" height="8.8" rx="1.2" fill="#36b37e"/><path d="M2.4 1.7H6.4V7.2L4.4 5.6L2.4 7.2Z" fill="#fff"/></g><g transform="translate(416.8,307.1375)"><circle cx="4.3" cy="4.3" r="4.3" fill="#14892c"/><path d="M2.3 4.4L3.7 5.8L6.3 3" fill="none" stroke="#fff" stroke-width="1.1"/></g><g transform="translate(115.4,325.1625)"><rect width="8.8" height="8.8" rx="1.2" fill="#36b37e"/><path d="M2.4 1.7H6.4V7.2L4.4 5.6L2.4 7.2Z" fill="#fff"/></g><g transform="translate(416.8,325.2625)"><circle cx="4.3" cy="4.3" r="4.3" fill="#14892c"/><path d="M2.3 4.4L3.7 5.8L6.3 3" fill="none" stroke="#fff" stroke-width="1.1"/></g><g transform="translate(115.4,343.2875)"><rect width="8.8" height="8.8" rx="1.2" fill="#36b37e"/><path d="M2.4 1.7H6.4V7.2L4.4 5.6L2.4 7.2Z" fill="#fff"/></g><g transform="translate(104.60000000000001,344.6875)"><path d="M.7 .6V5.4L3.4 3Z" fill="#6b778c"/></g><g transform="translate(416.8,343.3875)"><circle cx="4.3" cy="4.3" r="4.3" fill="#14892c"/><path d="M2.3 4.4L3.7 5.8L6.3 3" fill="none" stroke="#fff" stroke-width="1.1"/></g><g transform="translate(97.85,361.4125)"><rect width="8.8" height="8.8" rx="1.2" fill="#6554c0"/><path d="M5.6 .9L2 5.1H4.1L3.2 7.9L6.8 3.7H4.7Z" fill="#fff"/></g><g transform="translate(87.05,362.8125)"><path d="M.7 .6V5.4L3.4 3Z" fill="#6b778c"/></g><g transform="translate(416.8,361.5125)"><circle cx="4.3" cy="4.3" r="4.3" fill="#14892c"/><path d="M2.3 4.4L3.7 5.8L6.3 3" fill="none" stroke="#fff" stroke-width="1.1"/></g><g transform="translate(80.3,379.5375)"><rect width="8.8" height="8.8" rx="1.2" fill="#ff991f"/><path d="M4.4 1.5C5.7 1.5 6.6 2.4 6.6 3.6C6.6 4.5 6 5 5.5 5.6V6.4C5.5 6.9 5.1 7.2 4.4 7.2C3.7 7.2 3.3 6.9 3.3 6.4V5.6C2.8 5 2.2 4.5 2.2 3.6C2.2 2.4 3.1 1.5 4.4 1.5Z" fill="#fff"/><path d="M3.5 5.9H5.3" stroke="#ff991f" stroke-width=".5"/></g><g transform="translate(69.5,380.9375)"><path d="M.7 .6V5.4L3.4 3Z" fill="#6b778c"/></g><g transform="translate(416.8,379.6375)"><rect width="8.6" height="8.6" rx="1.2" fill="#d04437"/><path d="M2.6 2.6L6 6M6 2.6L2.6 6" stroke="#fff" stroke-width="1.2"/></g><g transform="translate(80.3,397.6625)"><rect width="8.8" height="8.8" rx="1.2" fill="#ff991f"/><path d="M4.4 1.5C5.7 1.5 6.6 2.4 6.6 3.6C6.6 4.5 6 5 5.5 5.6V6.4C5.5 6.9 5.1 7.2 4.4 7.2C3.7 7.2 3.3 6.9 3.3 6.4V5.6C2.8 5 2.2 4.5 2.2 3.6C2.2 2.4 3.1 1.5 4.4 1.5Z" fill="#fff"/><path d="M3.5 5.9H5.3" stroke="#ff991f" stroke-width=".5"/></g><g transform="translate(69.5,399.0625)"><path d="M.7 .6V5.4L3.4 3Z" fill="#6b778c"/></g><g transform="translate(416.8,397.7625)"><circle cx="4.3" cy="4.3" r="4.3" fill="#14892c"/><path d="M2.3 4.4L3.7 5.8L6.3 3" fill="none" stroke="#fff" stroke-width="1.1"/></g><g transform="translate(80.3,415.7875)"><rect width="8.8" height="8.8" rx="1.2" fill="#ff991f"/><path d="M4.4 1.5C5.7 1.5 6.6 2.4 6.6 3.6C6.6 4.5 6 5 5.5 5.6V6.4C5.5 6.9 5.1 7.2 4.4 7.2C3.7 7.2 3.3 6.9 3.3 6.4V5.6C2.8 5 2.2 4.5 2.2 3.6C2.2 2.4 3.1 1.5 4.4 1.5Z" fill="#fff"/><path d="M3.5 5.9H5.3" stroke="#ff991f" stroke-width=".5"/></g><g transform="translate(69.5,417.1875)"><path d="M.7 .6V5.4L3.4 3Z" fill="#6b778c"/></g><g transform="translate(416.8,415.8875)"><rect width="8.6" height="8.6" rx="1.2" fill="#d04437"/><path d="M2.6 2.6L6 6M6 2.6L2.6 6" stroke="#fff" stroke-width="1.2"/></g><g transform="translate(488,60) scale(0.9091,0.9091)"><rect width="8.8" height="8.8" rx="1" fill="#2684ff"/><rect x="1.9" y="1.9" width="3" height="3" rx=".3" fill="#2684ff" stroke="#fff" stroke-width=".75"/><rect x="4.1" y="3.8" width="3.3" height="3.3" rx=".4" fill="#fff"/></g><g transform="translate(903.5,59.3)"><circle cx="5" cy="5" r="4.9" fill="#fff"/><path d="M2.5 2.5L7.5 7.5M7.5 2.5L2.5 7.5" stroke="#42526e" stroke-width=".85"/></g><g transform="translate(495.1,83.1)"><circle cx="13.5" cy="13.5" r="13" fill="#8b55c8"/><path d="M9.2 10.2C8 7.4 14.5 5.2 18 10.4" fill="none" stroke="#5f3aa3" stroke-width="3.6" stroke-linecap="round"/><path d="M17.6 17.4C16 21 10 21.4 8.2 17" fill="none" stroke="#5f3aa3" stroke-width="3.6" stroke-linecap="round"/><path d="M9 8.8C9.5 5.4 15.4 5 18.2 9.8" fill="none" stroke="#fff" stroke-width="2.5" stroke-linecap="round"/><path d="M21.6 15L15.6 11.8L21.2 8.2Z" fill="#fff"/><path d="M17.2 18.6C15 21.4 10 21 8.2 16.6" fill="none" stroke="#4fd1c8" stroke-width="2.5" stroke-linecap="round"/><path d="M5.6 10.2L3.8 16.4L10.2 14.4Z" fill="#4fd1c8"/></g><g transform="translate(499.6,123)"><path d="M.5 8.1L1 5.7L5.9 .8L7.9 2.8L3 7.6Z" fill="#344563"/></g><g transform="translate(535.5,123.5)"><ellipse cx="4.1" cy="3.5" rx="3.6" ry="2.9" fill="none" stroke="#344563" stroke-width="1"/><path d="M2.1 5.6L1.6 7.5L4 6.2Z" fill="#344563"/></g><g transform="translate(636.7,124.4)"><path d="M1.4 2.2 L3 3.8 L4.6 2.2" fill="none" stroke="#344563" stroke-width="1.25" stroke-linecap="round" stroke-linejoin="round"/></g><g transform="translate(777.3,124.4)"><path d="M1.4 2.2 L3 3.8 L4.6 2.2" fill="none" stroke="#344563" stroke-width="1.25" stroke-linecap="round" stroke-linejoin="round"/></g><g transform="translate(847.5,123.5)"><circle cx="1.6" cy="4" r="1.1" fill="#344563"/><circle cx="6.8" cy="1.4" r="1.1" fill="#344563"/><circle cx="6.8" cy="6.6" r="1.1" fill="#344563"/><path d="M1.6 4L6.8 1.4M1.6 4L6.8 6.6" stroke="#344563" stroke-width=".7"/></g><g transform="translate(865.5,122.5)"><rect x=".7" y="3.4" width="5.4" height="4.9" rx=".8" fill="none" stroke="#344563" stroke-width="1.2"/><path d="M3.4 6.4V1M1.8 2.3L3.4 .7L5 2.3" fill="none" stroke="#344563" stroke-width="1.1"/></g><g transform="translate(899,124.4)"><path d="M1.4 2.2 L3 3.8 L4.6 2.2" fill="none" stroke="#344563" stroke-width="1.25" stroke-linecap="round" stroke-linejoin="round"/></g><g transform="translate(496.5,145.1)"><path d="M1.4 2.2 L3 3.8 L4.6 2.2" fill="none" stroke="#172b4d" stroke-width="1.2" stroke-linecap="round" stroke-linejoin="round"/></g><g transform="translate(592.1,158.7) scale(0.9205,0.9205)"><rect width="8.8" height="8.8" rx="1" fill="#2684ff"/><rect x="1.9" y="1.9" width="3" height="3" rx=".3" fill="#2684ff" stroke="#fff" stroke-width=".75"/><rect x="4.1" y="3.8" width="3.3" height="3.3" rx=".4" fill="#fff"/></g><g transform="translate(593.3,185.8)"><path d="M.6 2.8L3 .8L5.4 2.8M.6 5.8L3 3.8L5.4 5.8" fill="none" stroke="#e5343a" stroke-width="1.25"/></g><g transform="translate(496.5,293.9)"><path d="M1.4 2.2 L3 3.8 L4.6 2.2" fill="none" stroke="#172b4d" stroke-width="1.2" stroke-linecap="round" stroke-linejoin="round"/></g><g transform="translate(496.5,335.0)"><path d="M1.4 2.2 L3 3.8 L4.6 2.2" fill="none" stroke="#172b4d" stroke-width="1.2" stroke-linecap="round" stroke-linejoin="round"/></g><g transform="translate(744,337)"><circle cx="1" cy="1" r=".8" fill="#344563"/><circle cx="3.8" cy="1" r=".8" fill="#344563"/><circle cx="6.6" cy="1" r=".8" fill="#344563"/></g><g transform="translate(560,355.5)"><path d="M3.6 9.4C1.8 9.4 .7 8.3 .7 6.8C.7 5.4 1.7 4.4 3 4.3C3.3 2.3 4.9 .8 7 .8C9 .8 10.6 2.2 10.9 4C12.3 4.1 13.3 5.2 13.3 6.6C13.3 8.2 12.1 9.4 10.4 9.4" fill="none" stroke="#505f79" stroke-width=".8"/><path d="M7 10.4V5.4M5.2 7.2L7 5.4L8.8 7.2" fill="none" stroke="#505f79" stroke-width=".8"/></g><g transform="translate(496.5,393.9)"><path d="M1.4 2.2 L3 3.8 L4.6 2.2" fill="none" stroke="#172b4d" stroke-width="1.2" stroke-linecap="round" stroke-linejoin="round"/></g><g transform="translate(772.4,145.1)"><path d="M1.4 2.2 L3 3.8 L4.6 2.2" fill="none" stroke="#172b4d" stroke-width="1.2" stroke-linecap="round" stroke-linejoin="round"/></g><g transform="translate(782.7,173.4)"><circle cx="6.3" cy="6.3" r="6.25" fill="#f5392b"/><ellipse cx="6.3" cy="5.9" rx="4.1" ry="3.6" fill="#fbbf24"/><ellipse cx="6.3" cy="7.6" rx="2.7" ry="2.5" fill="#fde2b3"/><path d="M3.4 6.8C4 4.6 8.6 4.6 9.2 6.8C8 5.9 4.6 5.9 3.4 6.8Z" fill="#fbbf24"/><circle cx="5.2" cy="7.2" r=".4" fill="#5a3a1a"/><circle cx="7.4" cy="7.2" r=".4" fill="#5a3a1a"/><ellipse cx="6.3" cy="8.8" rx="1.2" ry=".7" fill="#fff"/></g><g transform="translate(782.7,222.5)"><circle cx="6.3" cy="6.3" r="6.25" fill="#4fc4bf"/><ellipse cx="6.3" cy="4.5" rx="3.5" ry="2.3" fill="#e8452f"/><rect x="3.5" y="4.6" width="5.6" height="3.6" rx="1.2" fill="#f6c8a2"/><path d="M3.5 7.2C3.5 11.4 9.1 11.4 9.1 7.2C8 8.2 4.6 8.2 3.5 7.2Z" fill="#e8452f"/><circle cx="5.2" cy="6.2" r=".4" fill="#3a2a2a"/><circle cx="7.4" cy="6.2" r=".4" fill="#3a2a2a"/><rect x="5.4" y="8.5" width="1.8" height=".7" rx=".3" fill="#fff"/></g><g transform="translate(772.4,311.2)"><path d="M1.4 2.2 L3 3.8 L4.6 2.2" fill="none" stroke="#172b4d" stroke-width="1.2" stroke-linecap="round" stroke-linejoin="round"/></g><g transform="translate(901.8,397)"><path d="M3.2 .5V5.9M.5 3.2H5.9" stroke="#6b778c" stroke-width="1.3"/></g><g transform="translate(784.2,414.2)"><rect x=".3" y=".3" width="5.4" height="5.4" rx=".8" fill="#e6e8ec" stroke="#8993a4" stroke-width=".6"/><path d="M1.3 3L2.6 4.3L4.9 1.3" fill="none" stroke="#172b4d" stroke-width="1.1"/></g></svg>
<svg class="b" style="left:0;top:0" width="920" height="450" viewBox="0 0 920 450"><path d="M0.00 430.70H920.00V450.00H0.00V430.70Z" fill="#f4f5f7"/></svg>
<div class="t" style="left:8px;top:434.90px;font-size:7.52px;color:#172b4d;font-weight:400;letter-spacing:-0.254px;">Showing <b>62</b> items</div>
<div class="t" style="left:900px;top:434.70px;font-size:7.73px;color:#172b4d;font-weight:400;letter-spacing:-0.274px;">Info</div>
<svg class="b" style="left:0;top:0" width="920" height="450" viewBox="0 0 920 450"><g transform="translate(890.6,436.3)"><circle cx="3.4" cy="3.4" r="3.4" fill="#253858"/><path d="M3.4 3V5.3" stroke="#fff" stroke-width="1.1"/><circle cx="3.4" cy="1.7" r=".65" fill="#fff"/></g></svg>
</div></body></html>
